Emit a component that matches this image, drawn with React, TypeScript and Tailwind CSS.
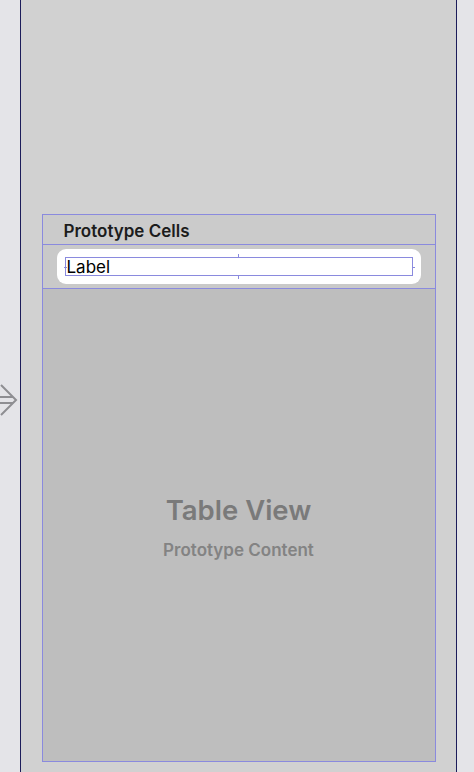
export default function App() {
  return (
    <div
      className="w-[474px] h-[772px] flex bg-[#e4e4e8] overflow-hidden"
      style={{ fontFamily: "Inter, 'Liberation Sans', sans-serif" }}
    >
      {/* left gutter with entry point arrow */}
      <div className="w-[20px] h-full flex items-center">
        <svg width="20" height="40" viewBox="0 0 20 40" className="mt-[28px]">
          <path
            d="M1 5 L16 20 L1 35 M-2 17 H13 M-2 23 H13"
            fill="none"
            stroke="#8e8e92"
            strokeWidth="2"
          />
        </svg>
      </div>

      {/* scene */}
      <div className="w-[437px] h-full flex flex-col bg-[#d1d1d1] border-x-[1.5px] border-[#1c1c5a] px-[20.5px] pt-[214px] pb-[10px]">
        <div className="flex-1 flex flex-col border border-[#8a8ade] bg-[#bebebe]">
          <div className="h-[29px] bg-[#cbcbcb] flex items-end pl-[21px] pb-[4px]">
            <span className="text-[17px] font-semibold text-[#1c1c1c] leading-none">
              Prototype Cells
            </span>
          </div>

          <div className="h-[45px] bg-[#c9c9c9] border-y border-[#8a8ade] px-[14px] py-[4px]">
            <div className="h-full bg-white rounded-[9px] px-[8px] py-[8px] flex">
              <div className="relative flex-1 border border-[#8a8ade] flex items-center">
                <span className="absolute -left-[2px] top-1/2 w-[3px] h-[1px] bg-[#8a8ade]" />
                <span className="absolute -right-[3px] top-1/2 w-[3px] h-[1px] bg-[#8a8ade]" />
                <span className="absolute left-[172px] -top-[4px] w-[1px] h-[4px] bg-[#8a8ade]" />
                <span className="absolute left-[172px] -bottom-[4px] w-[1px] h-[4px] bg-[#8a8ade]" />
                <span className="pl-[1px] pt-[1px] text-[17px] text-black leading-none">Label</span>
              </div>
            </div>
          </div>

          <div className="flex-1 flex flex-col items-center justify-center pt-[6px]">
            <span className="text-[27.5px] font-semibold text-[#7a7a7a] leading-none">
              Table View
            </span>
            <span className="mt-[17px] text-[17px] font-semibold text-[#838383] leading-none">
              Prototype Content
            </span>
          </div>
        </div>
      </div>

      <div className="flex-1 h-full bg-[#e4e4e8]" />
    </div>
  );
}
